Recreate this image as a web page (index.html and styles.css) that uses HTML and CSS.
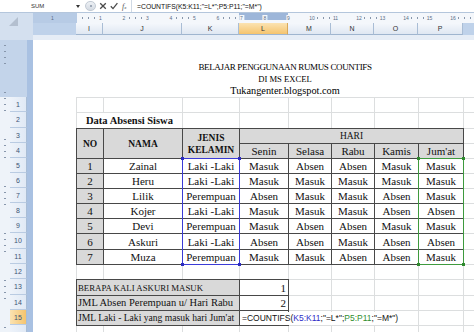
FILE: index.html
```html
<!DOCTYPE html>
<html>
<head>
<meta charset="utf-8">
<title>COUNTIFS</title>
<link rel="stylesheet" href="styles.css">
</head>
<body>
<div class="app">
  <div class="fbar">
    <div class="namebox"><span class="nm">SUM</span><span class="dd"></span></div>
    <div class="fbtns">
      <span class="pill"><span class="dot"></span></span>
      <svg class="ic" width="8" height="8" viewBox="0 0 8 8"><path d="M1.2 1.2 L6.8 6.8 M6.8 1.2 L1.2 6.8" stroke="#4a4a4a" stroke-width="1.3" fill="none"/></svg>
      <svg class="ic" width="8" height="8" viewBox="0 0 8 8"><path d="M0.8 4.2 L3 6.6 L7.4 1.2" stroke="#4a4a4a" stroke-width="1.3" fill="none"/></svg>
      <span class="fx">f<span class="fxs">x</span></span>
    </div>
    <div class="finput">=COUNTIFS(K5:K11;"=L*";P5:P11;"=M*")</div>
  </div>

  <div class="top">
    <div class="corner">
      <svg width="11" height="11" viewBox="0 0 11 11"><path d="M10 1 L10 10 L1 10 Z" fill="#b3bfcf"/></svg>
    </div>
    <div class="topmain">
      <div class="hruler">
        <div class="rmargin"><span class="rn">1</span></div>
        <div class="rpage">
          <span class="cm"><i>1</i></span><span class="cm"><i>2</i></span><span class="cm"><i>3</i></span><span class="cm"><i>4</i></span><span class="cm"><i>5</i></span><span class="cm"><i>6</i></span><span class="cm"><i>7</i></span><span class="cm"><i>8</i></span><span class="cm"><i>9</i></span><span class="cm"><i>10</i></span><span class="cm"><i>11</i></span><span class="cm"><i>12</i></span><span class="cm"><i>13</i></span><span class="cm"><i>14</i></span><span class="cm"><i>15</i></span><span class="cm"><i>16</i></span>
        </div>
      </div>
      <div class="colheads">
        <div class="chpad"></div>
        <div class="ch w-i">I</div>
        <div class="ch w-j">J</div>
        <div class="ch w-k">K</div>
        <div class="ch w-l sel">L</div>
        <div class="ch w-m">M</div>
        <div class="ch w-n">N</div>
        <div class="ch w-o">O</div>
        <div class="ch w-p">P</div>
        <div class="chfill"></div>
      </div>
      <div class="strip"></div>
    </div>
  </div>

  <div class="main">
    <div class="vruler"></div>
    <div class="rowheads">
      <div class="rhtop"></div>
      <div class="rh">1</div>
      <div class="rh t16">2</div>
      <div class="rh">3</div>
      <div class="rh">4</div>
      <div class="rh">5</div>
      <div class="rh">6</div>
      <div class="rh">7</div>
      <div class="rh">8</div>
      <div class="rh">9</div>
      <div class="rh t16">10</div>
      <div class="rh">11</div>
      <div class="rh">12</div>
      <div class="rh t16">13</div>
      <div class="rh">14</div>
      <div class="rh sel">15</div>
      <div class="rh"></div>
    </div>
    <div class="lstrip"></div>
    <div class="pagewrap">
      <div class="page">
        <div class="phead">
          <div class="ph1">BELAJAR PENGGUNAAN RUMUS COUNTIFS</div>
          <div class="ph2">DI MS EXCEL</div>
          <div class="ph3">Tukangenter.blogspot.com</div>
        </div>
        <div class="sheetwrap">
          <table class="sheet">
            <colgroup>
              <col class="c-i"><col class="c-j"><col class="c-k"><col class="c-l"><col class="c-m"><col class="c-n"><col class="c-o"><col class="c-p"><col class="c-q">
            </colgroup>
            <tr class="h15"><td></td><td></td><td></td><td></td><td></td><td></td><td></td><td></td><td></td></tr>
            <tr class="h16"><td colspan="2" class="ttl">Data Absensi Siswa</td><td></td><td></td><td></td><td></td><td></td><td></td><td></td></tr>
            <tr class="h15">
              <td rowspan="2" class="d g hb">NO</td>
              <td rowspan="2" class="d g hb">NAMA</td>
              <td rowspan="2" class="d g hb jk">JENIS<br>KELAMIN</td>
              <td colspan="5" class="d g hc">HARI</td>
              <td></td>
            </tr>
            <tr class="h15"><td class="d g">Senin</td><td class="d g">Selasa</td><td class="d g">Rabu</td><td class="d g">Kamis</td><td class="d g">Jum'at</td><td></td></tr>
            <tr class="h15"><td class="d g">1</td><td class="d">Zainal</td><td class="d">Laki -Laki</td><td class="d">Masuk</td><td class="d">Absen</td><td class="d">Absen</td><td class="d">Masuk</td><td class="d">Masuk</td><td></td></tr>
            <tr class="h15"><td class="d g">2</td><td class="d">Heru</td><td class="d">Laki -Laki</td><td class="d">Masuk</td><td class="d">Masuk</td><td class="d">Masuk</td><td class="d">Masuk</td><td class="d">Masuk</td><td></td></tr>
            <tr class="h15"><td class="d g">3</td><td class="d">Lilik</td><td class="d">Perempuan</td><td class="d">Absen</td><td class="d">Masuk</td><td class="d">Masuk</td><td class="d">Absen</td><td class="d">Masuk</td><td></td></tr>
            <tr class="h15"><td class="d g">4</td><td class="d">Kojer</td><td class="d">Laki -Laki</td><td class="d">Masuk</td><td class="d">Masuk</td><td class="d">Masuk</td><td class="d">Absen</td><td class="d">Absen</td><td></td></tr>
            <tr class="h15"><td class="d g">5</td><td class="d">Devi</td><td class="d">Perempuan</td><td class="d">Masuk</td><td class="d">Absen</td><td class="d">Absen</td><td class="d">Masuk</td><td class="d">Masuk</td><td></td></tr>
            <tr class="h16"><td class="d g">6</td><td class="d">Askuri</td><td class="d">Laki -Laki</td><td class="d">Absen</td><td class="d">Absen</td><td class="d">Masuk</td><td class="d">Absen</td><td class="d">Absen</td><td></td></tr>
            <tr class="h15"><td class="d g">7</td><td class="d">Muza</td><td class="d">Perempuan</td><td class="d">Masuk</td><td class="d">Masuk</td><td class="d">Absen</td><td class="d">Absen</td><td class="d">Masuk</td><td></td></tr>
            <tr class="h15"><td></td><td></td><td></td><td></td><td></td><td></td><td></td><td></td><td></td></tr>
            <tr class="h16"><td colspan="3" class="d g lbl l13">BERAPA KALI ASKURI MASUK</td><td class="d num">1</td><td></td><td></td><td></td><td></td><td></td></tr>
            <tr class="h15"><td colspan="3" class="d g lbl l14">JML Absen Perempuan u/ Hari Rabu</td><td class="d num">2</td><td></td><td></td><td></td><td></td><td></td></tr>
            <tr class="h15"><td colspan="3" class="d g lbl l15">JML Laki - Laki yang masuk hari Jum'at</td><td class="d edit"><div class="editor">=COUNTIFS(<span class="rk">K5:K11</span>;"=L*";<span class="rp">P5:P11</span>;"=M*")</div></td><td></td><td></td><td></td><td></td><td></td></tr>
            <tr class="h15"><td></td><td></td><td></td><td></td><td></td><td></td><td></td><td></td><td></td></tr>
          </table>
          <div class="hl hl-k"><span class="sq tl"></span><span class="sq tr"></span><span class="sq bl"></span><span class="sq br"></span></div>
          <div class="hl hl-p"><span class="sq tl"></span><span class="sq tr"></span><span class="sq bl"></span><span class="sq br"></span></div>
        </div>
      </div>
    </div>
  </div>
</div>
</body>
</html>
```

FILE: styles.css
```css
* { box-sizing: border-box; margin: 0; padding: 0; }
html, body { width: 474px; height: 332px; overflow: hidden; background: #fff; }
body { font-family: "Liberation Sans", Arial, sans-serif; }

.app { width: 474px; height: 332px; overflow: hidden; display: flex; flex-direction: column; }

/* formula bar */
.fbar { height: 13px; flex: none; display: flex; background: #fff; border-bottom: 1px solid #b4c6dc; }
.namebox { width: 83px; flex: none; display: flex; align-items: center; padding-left: 31px; font-size: 6px; color: #333; }
.nm { flex: 1; }
.dd { width: 0; height: 0; border-left: 2.5px solid transparent; border-right: 2.5px solid transparent; border-top: 3px solid #333; margin-right: 3px; }
.fbtns { width: 48px; flex: none; display: flex; align-items: center; gap: 2px; padding-left: 2px; }
.pill { width: 11px; height: 10px; border-radius: 5px; background: linear-gradient(#eef1f5, #d4dae2); border: 1px solid #c2cad4; display: flex; align-items: center; justify-content: center; }
.dot { width: 2px; height: 2px; background: #8a96a6; border-radius: 1px; }
.ic { flex: none; margin-left: 1px; }
.fx { font-family: "Liberation Serif", serif; font-style: italic; font-size: 8px; color: #555; margin-left: 2px; }
.fxs { font-size: 5px; }
.finput { flex: 1; display: flex; align-items: center; padding-left: 5px; font-size: 6.8px; color: #111; white-space: nowrap; border-left: 1px solid #d0d9e4; }

/* top headers */
.top { height: 27px; flex: none; display: flex; }
.corner { width: 33px; flex: none; background: #d4e0ef; display: flex; justify-content: center; padding-top: 3px; padding-right: 6px; }
.topmain { flex: 1; display: flex; flex-direction: column; min-width: 0; }
.hruler { height: 10px; flex: none; display: flex; background: #d4e0ef; }
.rmargin { width: 44px; flex: none; background: #b7cbe5; font-size: 5px; color: #5b6d85; display: flex; align-items: center; padding-left: 18px; }
.rpage { flex: 1; display: flex; align-items: center; font-size: 5px; color: #5b6d85;
  background:
    linear-gradient(#9db6d9, #9db6d9) 162px 0 / 49px 7px no-repeat,
    repeating-linear-gradient(90deg, transparent 0 5.375px, #8796ab 5.375px 5.875px) 0 4px / 100% 2px repeat-x,
    #f4f7fb; }
.cm { width: 23.5px; flex: none; display: flex; justify-content: flex-end; }
.cm i { font-style: normal; transform: translateX(50%); background: #f4f7fb; padding: 0 1px; line-height: 6px; }
.colheads { height: 12px; flex: none; display: flex; background: #bfd2ea; }
.chpad { width: 43px; flex: none; }
.ch { flex: none; display: flex; align-items: center; justify-content: center; font-size: 7px; color: #333;
  background: linear-gradient(#f5f8fc, #dfe7f2); border-right: 1px solid #a9bdd5; border-bottom: 1px solid #9fb5cf; }
.ch.sel { background: linear-gradient(#fbe3b2, #f5c46e); border-right-color: #d8a85a; }
.chfill { flex: 1; }
.w-i { width: 27px; } .w-j { width: 79px; } .w-k { width: 57px; } .w-l { width: 49px; }
.w-m { width: 43px; } .w-n { width: 43px; } .w-o { width: 44px; } .w-p { width: 45px; }
.strip { flex: 1; background: #e6edf6; }

/* main */
.main { flex: 1; display: flex; min-height: 0; }
.vruler { width: 10px; flex: none;
  background:
    repeating-linear-gradient(180deg, transparent 0 5.375px, #8796ab 5.375px 5.875px) 4px 0 / 2px 100% repeat-y,
    linear-gradient(#c3d4ea 0 57px, #eef3f9 57px); }
.rowheads { width: 17px; flex: none; display: flex; flex-direction: column; background: #c3d4ea; }
.rhtop { height: 57px; flex: none; }
.rh { height: 15px; flex: none; display: flex; align-items: center; justify-content: center; font-size: 7px; color: #3d5576;
  background: linear-gradient(90deg, #eef3fa, #e0e9f5); border-bottom: 1px solid #b9cbe2; border-right: 1px solid #a9bdd5; }
.rh.t16 { height: 16px; }
.rh.sel { background: linear-gradient(90deg, #fbe3b2, #f5c46e); }
.lstrip { width: 6px; flex: none; background: #a9c1e2; }
.pagewrap { flex: 1; overflow: hidden; background: #fff; min-width: 0; }
.page { width: 504px; }
.phead { padding-top: 21px; font-family: "Liberation Serif", serif; line-height: 12px; text-align: center; color: #000; }
.ph1 { font-size: 9px; letter-spacing: -0.35px; }
.ph2 { font-size: 8.6px; }
.ph3 { font-size: 10.3px; }

/* sheet */
.sheetwrap { margin-left: 43px; position: relative; width: 427px; }
.sheet { border-collapse: collapse; table-layout: fixed; width: 427px; font-family: "Liberation Serif", serif; font-size: 11px; color: #111; }
.c-i { width: 27px; } .c-j { width: 79px; } .c-k { width: 57px; } .c-l { width: 49px; }
.c-m { width: 43px; } .c-n { width: 43px; } .c-o { width: 44px; } .c-p { width: 45px; } .c-q { width: 40px; }
.sheet td { border: 1px solid #dcdedf; padding: 0 2px; white-space: nowrap; overflow: hidden; text-align: center; vertical-align: middle; line-height: 12px; }
.h15 td { height: 15px; }
.h16 td { height: 16px; }
.sheet td.d { border: 1px double #484848; }
.sheet td.g { background: #d9d9d9; }
.hb { font-weight: bold; font-size: 9.5px; }
.hc { font-size: 9.5px; }
.jk { line-height: 12px; }
.ttl { font-weight: bold; font-size: 10.5px; }
.sheet td.lbl { text-align: left; padding-left: 1px; }
.sheet td.l13 { font-size: 8.8px; }
.sheet td.l14 { font-size: 10.5px; }
.sheet td.l15 { font-size: 9.6px; }
.sheet td.num { text-align: right; }
.sheet td.edit { overflow: visible; text-align: left; padding: 0; }
.editor { position: relative; z-index: 2; width: max-content; background: #fff; padding: 0 3px 0 2px; font-family: "Liberation Sans", Arial, sans-serif; font-size: 8.5px; color: #111; line-height: 13px; }
.rk { color: #2d2dc8; }
.rp { color: #2f8f2f; }

/* range highlights of the formula being edited */
.hl { position: absolute; top: 61px; height: 107px; border: 1px solid; pointer-events: none; }
.hl-k { left: 106px; width: 58px; border-color: #3b3bd6; }
.hl-p { left: 342px; width: 46px; border-color: #3e9a3e; }
.sq { position: absolute; width: 3px; height: 3px; }
.hl-k .sq { background: #2b2bc0; }
.hl-p .sq { background: #2f8a2f; }
.sq.tl { left: -2px; top: -2px; } .sq.tr { right: -2px; top: -2px; }
.sq.bl { left: -2px; bottom: -2px; } .sq.br { right: -2px; bottom: -2px; }
```
